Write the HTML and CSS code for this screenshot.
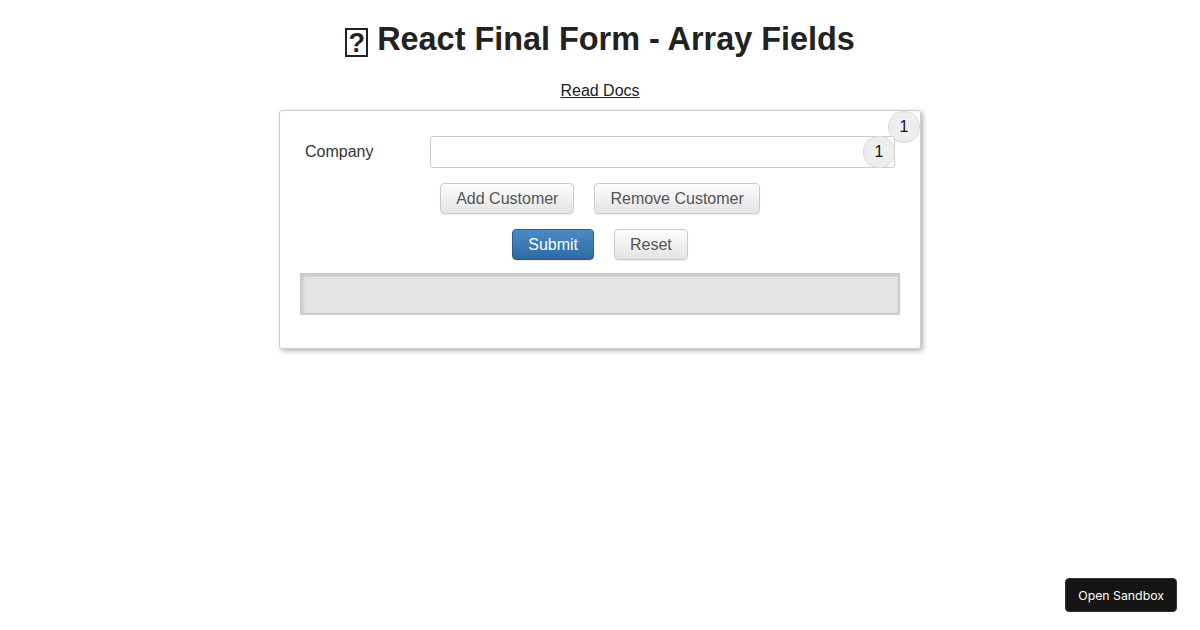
FILE: index.html
```html
<!DOCTYPE html>
<html>
<head>
<meta charset="utf-8">
<link rel="stylesheet" href="styles.css">
</head>
<body>
<div class="app">
  <h1 class="title"><span class="tofu">?</span> React Final Form - Array Fields</h1>
  <a class="docs" href="#">Read Docs</a>
  <form class="form">
    <i class="count">1</i>
    <div class="field">
      <label class="label">Company</label>
      <input class="input" type="text">
      <i class="count">1</i>
    </div>
    <div class="buttons">
      <button class="btn" type="button">Add Customer</button>
      <button class="btn" type="button">Remove Customer</button>
    </div>
    <div class="buttons">
      <button class="btn primary" type="button">Submit</button>
      <button class="btn" type="button">Reset</button>
    </div>
    <pre class="values"></pre>
  </form>
</div>
<button class="sandbox" type="button">Open Sandbox</button>
</body>
</html>
```
FILE: styles.css
```css
body {
  margin: 8px;
  font-family: "Liberation Sans", Arial, sans-serif;
  background: #fff;
}
.title {
  text-align: center;
  color: #222;
  font-size: 32.4px;
  margin: 13px 0 24px;
}
.tofu {
  display: inline-block;
  width: 23px;
  height: 29px;
  box-sizing: border-box;
  border: 2px solid #222;
  font-size: 27px;
  line-height: 26px;
  text-align: center;
  vertical-align: -2px;
}
.docs {
  display: block;
  text-align: center;
  color: #222;
  font-size: 16px;
}
.form {
  position: relative;
  max-width: 600px;
  margin: 10px auto;
  border: 1px solid #ccc;
  padding: 20px;
  box-shadow: 2px 2px 5px rgba(0, 0, 0, 0.3);
  border-radius: 3px;
}
.field {
  position: relative;
  display: flex;
  flex-flow: row nowrap;
  line-height: 2em;
  margin: 5px;
}
.label {
  color: #333;
  width: 110px;
  font-size: 16px;
  line-height: 32px;
}
.input {
  flex: 1;
  padding: 3px 5px;
  font-size: 16px;
  margin: 0 0 0 15px;
  height: 32px;
  box-sizing: border-box;
  border: 1px solid #ccc;
  border-radius: 3px;
  font-family: inherit;
}
.count {
  position: absolute;
  top: 0;
  right: 0;
  width: 30px;
  height: 30px;
  border-radius: 15px;
  background: #eee;
  border: 1px solid #ddd;
  text-align: center;
  font-size: 16px;
  line-height: 30px;
  font-style: normal;
  color: #111;
}
.buttons {
  display: flex;
  flex-flow: row nowrap;
  justify-content: center;
  margin-top: 15px;
}
.btn {
  margin: 0 10px;
  height: 31px;
  padding: 0 15px;
  font-family: inherit;
  font-size: 16px;
  color: #555;
  border: 1px solid #ccc;
  border-radius: 4px;
  background: linear-gradient(to bottom, #fdfdfd 0%, #e4e4e4 100%);
  box-shadow: 0 1px 1px rgba(0, 0, 0, 0.08);
}
.btn.primary {
  color: #fff;
  border-color: #2a5d8f;
  background: linear-gradient(to bottom, #4a8bc6 0%, #2f6aa3 100%);
}
.values {
  margin: 13px 0 13px;
  border: 2px solid #ccc;
  background: #e5e5e5;
  box-shadow: inset 1px 1px 3px rgba(0, 0, 0, 0.15);
  padding: 19px;
}
.sandbox {
  position: fixed;
  right: 23px;
  bottom: 18px;
  background: #151515;
  color: #fff;
  border: 1px solid #333;
  border-radius: 4px;
  font-family: Inter, "Liberation Sans", sans-serif;
  font-size: 12.3px;
  padding: 0 12px;
  height: 34px;
}
```
